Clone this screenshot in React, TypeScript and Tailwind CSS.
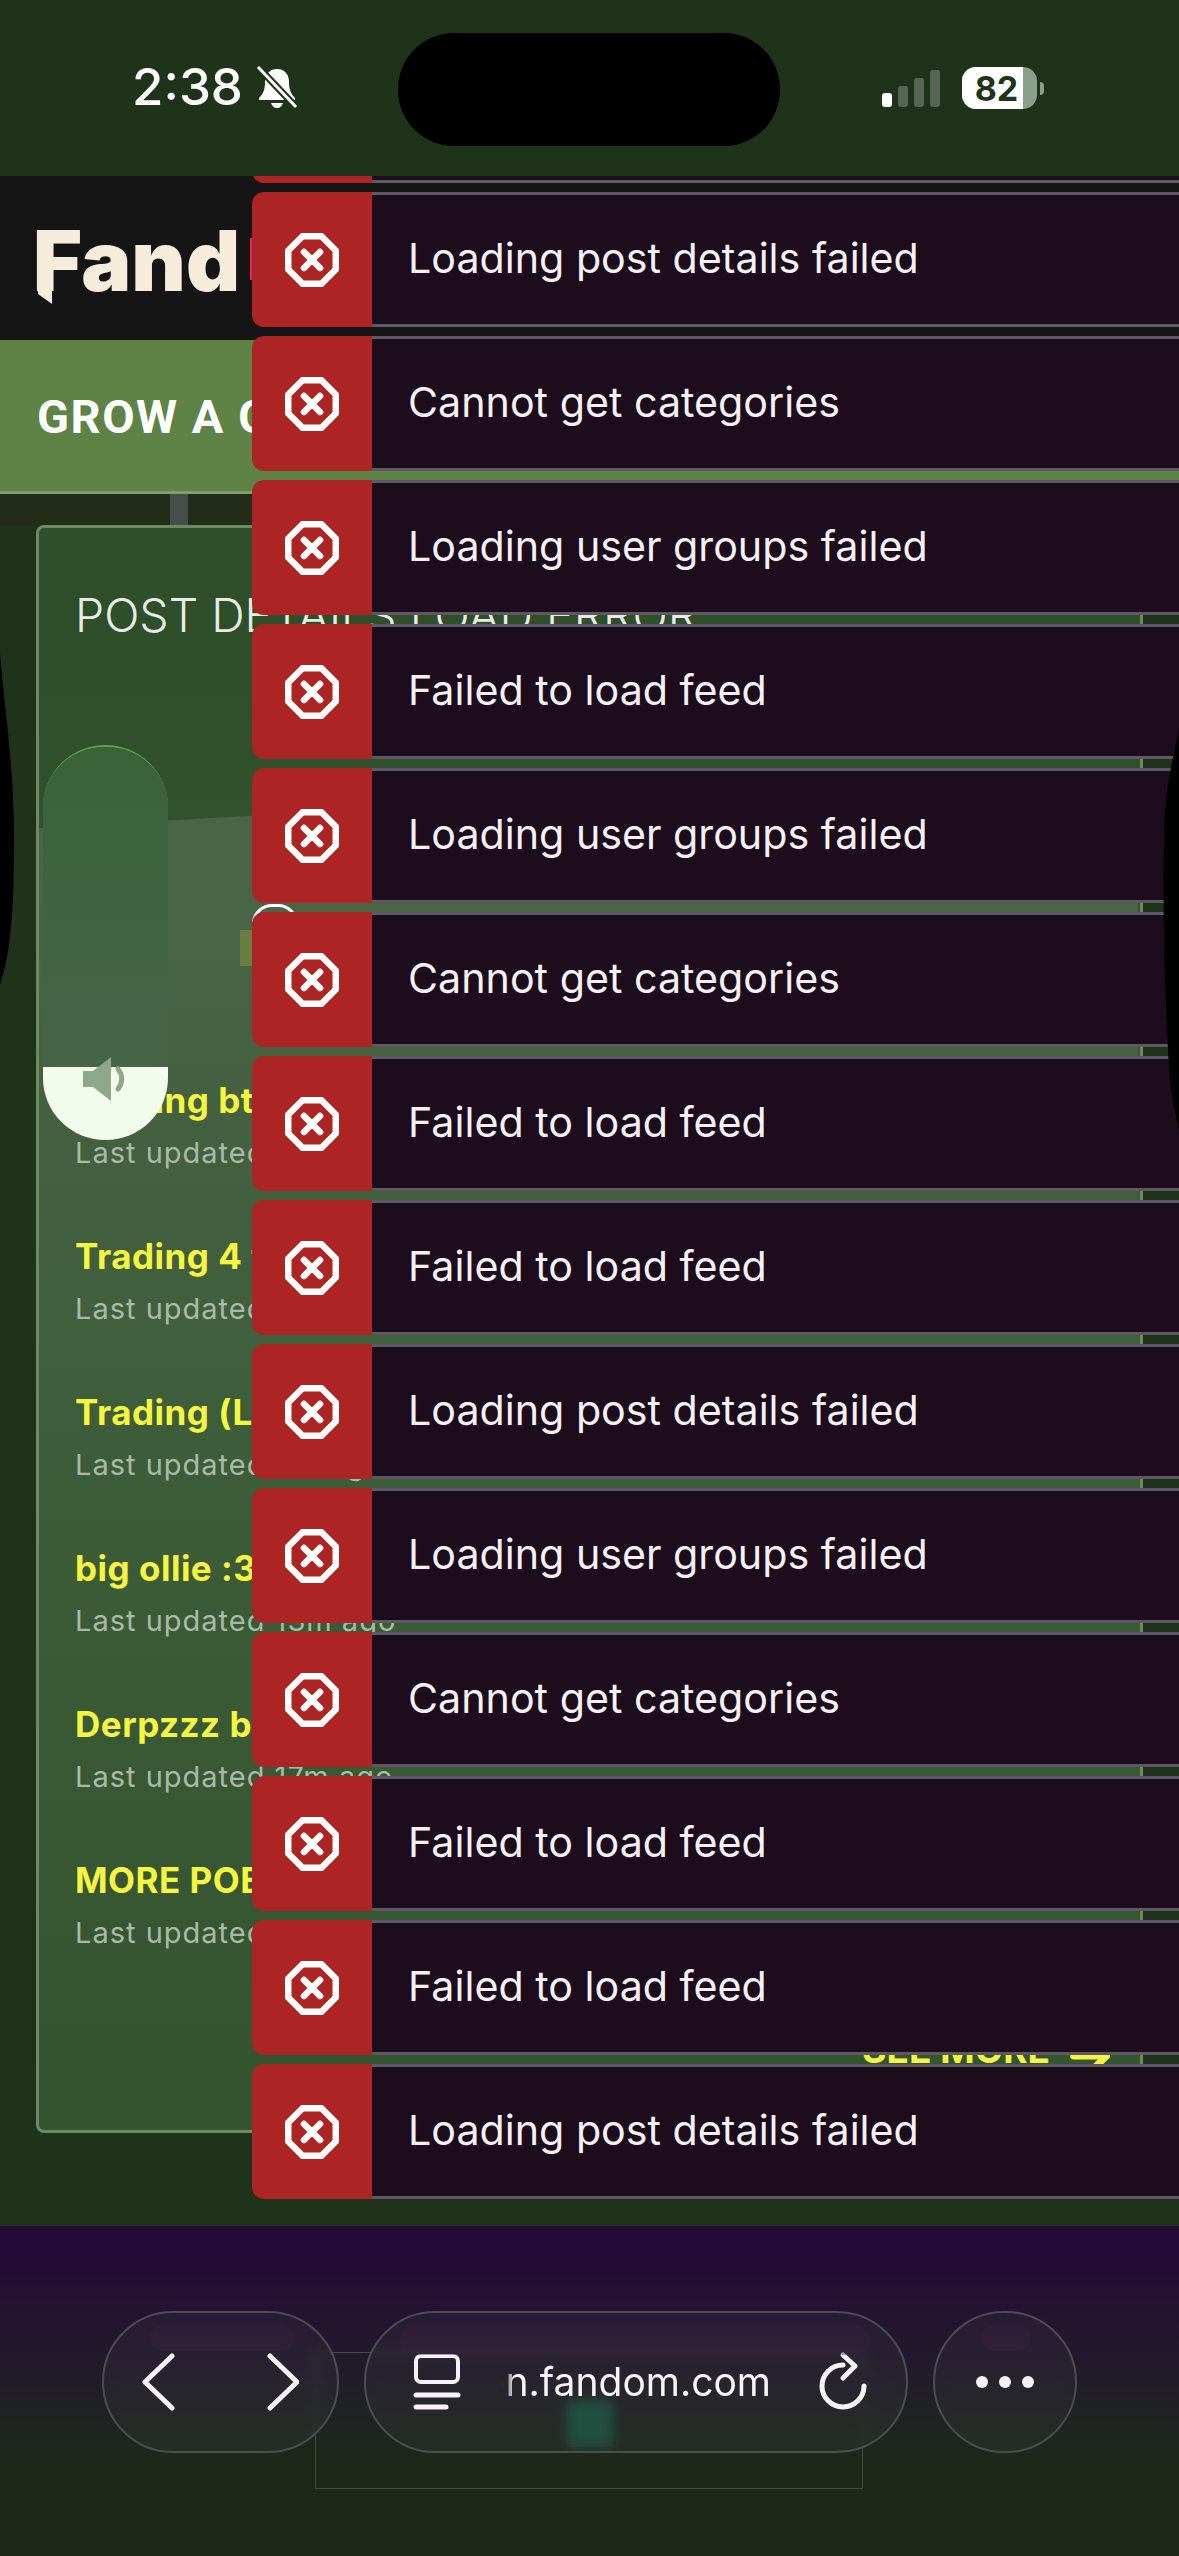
import React from 'react';
import { ArrowRight } from 'lucide-react';

const toasts = [
  'Loading post details failed',
  'Loading post details failed',
  'Cannot get categories',
  'Loading user groups failed',
  'Failed to load feed',
  'Loading user groups failed',
  'Cannot get categories',
  'Failed to load feed',
  'Failed to load feed',
  'Loading post details failed',
  'Loading user groups failed',
  'Cannot get categories',
  'Failed to load feed',
  'Failed to load feed',
  'Loading post details failed',
];

const posts = [
  { title: 'Trading btw', time: 'Last updated 4m ago' },
  { title: 'Trading 4 trading', time: 'Last updated 7m ago' },
  { title: 'Trading (LF offers)', time: 'Last updated 9m ago' },
  { title: 'big ollie :3 stock', time: 'Last updated 13m ago' },
  { title: 'Derpzzz beta', time: 'Last updated 17m ago' },
  { title: 'MORE POETS', time: 'Last updated 18m ago' },
];

const ErrorIcon = () => (
  <svg width="54" height="54" viewBox="0 0 54 54" fill="none" stroke="white">
    <polygon points="17.5,3.25 36.5,3.25 50.75,17.5 50.75,36.5 36.5,50.75 17.5,50.75 3.25,36.5 3.25,17.5" strokeWidth="6.5" strokeLinejoin="round" />
    <path d="M19 19 35 35M35 19 19 35" strokeWidth="6.5" strokeLinecap="round" />
  </svg>
);

const Toast = ({ message }: { message: string }) => (
  <div className="flex h-[135px] w-[1000px] shrink-0">
    <div className="flex w-[120px] items-center justify-center rounded-l-xl bg-[#ad2424]">
      <ErrorIcon />
    </div>
    <div className="flex flex-1 items-center border-y-[3px] border-[#5f5860] bg-[#1c0c1c] pb-[2px] pl-[36px] text-[41.2px] text-[#f5f1f5]">
      {message}
    </div>
  </div>
);

const StatusBar = () => (
  <div className="relative flex h-[176px] shrink-0 items-start bg-[#1e3319] pl-[132px] pt-[56px] text-white">
    <span className="text-[51px] font-medium leading-[62px]">2:38</span>
    <svg width="44" height="44" viewBox="0 0 44 44" className="ml-[12px] mt-[10px]">
      <path d="M22 3c-8 0-12 6-12 13 0 8-2 12-6 16v2h36v-2c-4-4-6-8-6-16 0-7-4-13-12-13Z" fill="white" />
      <path d="M16 37h12c-1 3-3 5-6 5s-5-2-6-5Z" fill="white" />
      <path d="M3 1 41 41" stroke="#1e3319" strokeWidth="7" />
      <path d="M3 1 41 41" stroke="white" strokeWidth="3" />
    </svg>
    <div className="absolute left-[398px] top-[33px] h-[113px] w-[382px] rounded-[56px] bg-black" />
    <div className="absolute left-[882px] top-[67px] flex h-[40px] items-end gap-[6px]">
      <div className="h-[14px] w-[10px] rounded-[3px] bg-white" />
      <div className="h-[21px] w-[10px] rounded-[3px] bg-white/25" />
      <div className="h-[29px] w-[10px] rounded-[3px] bg-white/25" />
      <div className="h-[37px] w-[10px] rounded-[3px] bg-white/25" />
    </div>
    <div className="absolute left-[962px] top-[67px] flex h-[42px] w-[75px] overflow-hidden rounded-[14px] bg-[#8a9f8a]">
      <div className="flex w-[61px] items-center justify-center bg-white pl-[8px] text-[34px] font-bold text-[#1e3319]">82</div>
    </div>
    <div className="absolute left-[1040px] top-[82px] h-[13px] w-[4px] rounded-r-full bg-[#8a9f8a]" />
  </div>
);

const pillClass = 'absolute top-[85px] flex h-[142px] items-center overflow-hidden border-2 border-[#4a4e52] bg-white/[0.03] backdrop-blur-[6px]';

const BrowserBar = () => (
  <div className="relative h-[330px] shrink-0 bg-gradient-to-b from-[#240a36] from-[10%] via-[#221a2a] via-[42%] to-[#1d281b] to-[70%]">
    {/* page content showing through the toolbar */}
    <div className="absolute left-[315px] top-[126px] h-[137px] w-[548px] border border-[#3c5438]" />
    <div className="absolute left-[567px] top-[174px] h-[47px] w-[46px] bg-[#1a4a3a]" />

    <div className={`${pillClass} left-[102px] w-[237px] justify-between rounded-[71px] px-[38px]`}>
      <div className="absolute left-[46px] top-[12px] h-[26px] w-[144px] rounded-full bg-[#3a2440]/40" />
      <svg width="36" height="60" viewBox="0 0 36 60" fill="none" stroke="#f5f3f5" strokeWidth="5" strokeLinecap="round" strokeLinejoin="round">
        <path d="M30 4 3 30l27 26" />
      </svg>
      <svg width="36" height="60" viewBox="0 0 36 60" fill="none" stroke="#f5f3f5" strokeWidth="5" strokeLinecap="round" strokeLinejoin="round">
        <path d="M7 4 34 30 7 56" />
      </svg>
    </div>

    <div className={`${pillClass} left-[364px] w-[544px] rounded-[71px] pl-[47px] pr-[34px]`}>
      <div className="absolute left-[34px] top-[12px] h-[30px] w-[470px] rounded-full bg-[#3a2440]/40" />
      <svg width="48" height="56" viewBox="0 0 48 56" fill="none" stroke="#f5f3f5" strokeLinecap="round" className="shrink-0">
        <rect x="3" y="2" width="42" height="26" rx="5" strokeWidth="4" />
        <path d="M3 41h42M3 53h30" strokeWidth="5" />
      </svg>
      <div className="ml-[42px] flex w-[268px] justify-end overflow-hidden whitespace-nowrap text-[39px] leading-[48px] text-[#f5f5f5] [mask-image:linear-gradient(to_right,transparent,black_4%)]">
        <span className="shrink-0">en.fandom.com</span>
      </div>
      <svg width="54" height="62" viewBox="0 0 54 62" fill="none" stroke="#f5f3f5" strokeWidth="5" strokeLinecap="round" strokeLinejoin="round" className="ml-auto shrink-0">
        <path d="M25 14A21 21 0 1 0 46 35" />
        <path d="M25 4 37 15 25 27" />
      </svg>
    </div>

    <div className={`${pillClass} left-[933px] w-[144px] justify-center gap-[11px] rounded-full`}>
      <div className="absolute left-[46px] top-[12px] h-[26px] w-[50px] rounded-full bg-[#3a2440]/40" />
      <div className="size-[12px] rounded-full bg-[#f5f3f5]" />
      <div className="size-[12px] rounded-full bg-[#f5f3f5]" />
      <div className="size-[12px] rounded-full bg-[#f5f3f5]" />
    </div>
  </div>
);

export default function App() {
  return (
    <div className="relative flex h-[2556px] w-[1179px] flex-col overflow-hidden bg-[#1e3319] font-['Inter',sans-serif]">
      <StatusBar />

      {/* Site header */}
      <div className="relative flex h-[164px] shrink-0 items-center bg-[#151515] pl-[33px] pt-[6px]">
        <span className="text-[84px] font-black leading-none text-[#f5ecdc]">Fand</span>
        <svg width="14" height="16" viewBox="0 0 14 16" className="absolute left-[38px] top-[113px]" fill="#f5ecdc">
          <polygon points="0,0 14,0 14,15 0,5" />
        </svg>
        <div className="absolute left-[250px] top-[62px] h-[42px] w-[2px] bg-[#e0245e]" />
      </div>

      {/* Wiki banner */}
      <div className="flex h-[154px] shrink-0 items-center border-b-[3px] border-[#7f9f6f] bg-[#5f8346] pl-[37px] pt-[4px]">
        <span className="whitespace-nowrap font-['Roboto',sans-serif] text-[47px] font-bold tracking-[1.5px] text-white">GROW A GARDEN WIKI</span>
      </div>

      {/* Page body */}
      <div className="relative flex-1 bg-[#1e3319] px-[36px] pt-[31px]">
        <div className="absolute left-0 top-0 h-[31px] w-full bg-[#232c18]" />
        <div className="absolute left-[170px] top-0 h-[31px] w-[18px] bg-[#454e4b]" />

        <div className="relative h-[1608px] overflow-hidden rounded-lg border-[3px] border-[#6d8a65] bg-gradient-to-b from-[#2e4f2a] from-[10%] via-[#3f5f3c] via-[50%] to-[#34542f]">
          <svg width="1099" height="900" viewBox="0 0 1099 900" className="absolute left-0 top-[260px]">
            <defs>
              <linearGradient id="hero" x1="0" y1="0" x2="0" y2="1">
                <stop offset="0" stopColor="#4a6446" />
                <stop offset="0.2" stopColor="#4a6446" />
                <stop offset="0.7" stopColor="#4a6446" stopOpacity="0" />
              </linearGradient>
            </defs>
            <polygon points="0,40 700,0 1099,-30 1099,900 0,900" fill="url(#hero)" />
          </svg>
          <div className="absolute left-[213px] top-[376px] h-[130px] w-[46px] rounded-t-[20px] border-[3px] border-white" />
          <div className="absolute left-[201px] top-[402px] h-[36px] w-[12px] bg-[#6a7f3f]" />

          <div className="relative flex h-full flex-col pl-[36px] pr-[22px] pt-[62px]">
            <h1 className="whitespace-nowrap text-[46.4px] font-light leading-[50px] text-[#e8ebe6]">POST DETAILS LOAD ERROR</h1>
            <ul className="mt-[434px]">
              {posts.map((post) => (
                <li key={post.title} className="h-[156px]">
                  <div className="whitespace-nowrap text-[35px] font-bold leading-[52px] tracking-[0.5px] text-[#f5f542]">{post.title}</div>
                  <div className="mt-[1px] whitespace-nowrap text-[29px] leading-[52px] tracking-[1px] text-[#a9baa6]">{post.time}</div>
                </li>
              ))}
            </ul>
            <div className="mt-[6px] flex items-center justify-end gap-[12px] text-[37px] font-bold leading-[40px] text-[#f5f542]">
              SEE MORE
              <ArrowRight size={56} strokeWidth={3} className="mt-[12px]" />
            </div>
          </div>
        </div>
      </div>

      <BrowserBar />

      {/* Volume HUD */}
      <div className="absolute left-[43px] top-[745px] flex h-[395px] w-[125px] flex-col overflow-hidden rounded-[62px] border-t-2 border-[#5aa04f]">
        <div className="h-[320px] bg-gradient-to-b from-[#3a6338] to-[#466547]" />
        <div className="relative flex-1 bg-[#f3fbec]">
          <svg width="46" height="44" viewBox="0 0 46 44" className="absolute left-[40px] top-[-10px]" fill="#8ea88a">
            <path d="M0 14h10L28 0v44L10 30H0Z" />
            <path d="M35 12c5 6 5 14 0 20" stroke="#8ea88a" strokeWidth="5" fill="none" strokeLinecap="round" />
          </svg>
        </div>
      </div>

      {/* Error toast stack */}
      <div className="absolute left-[252px] top-[176px] h-[2040px] w-[927px] overflow-hidden">
        <div className="mt-[-128px] flex flex-col gap-[9px]">
          {toasts.map((message, i) => (
            <Toast key={i} message={message} />
          ))}
        </div>
      </div>

      {/* Black edges bending in from the screen sides */}
      <svg width="1179" height="2556" viewBox="0 0 1179 2556" className="pointer-events-none absolute left-0 top-0" fill="black">
        <path d="M0 654C6 720 14 770 14 840C14 900 12 950 0 985Z" />
        <path d="M1179 730C1172 760 1167 785 1165 810C1162 880 1164 1000 1170 1080C1172 1100 1176 1115 1179 1130Z" />
      </svg>
    </div>
  );
}
